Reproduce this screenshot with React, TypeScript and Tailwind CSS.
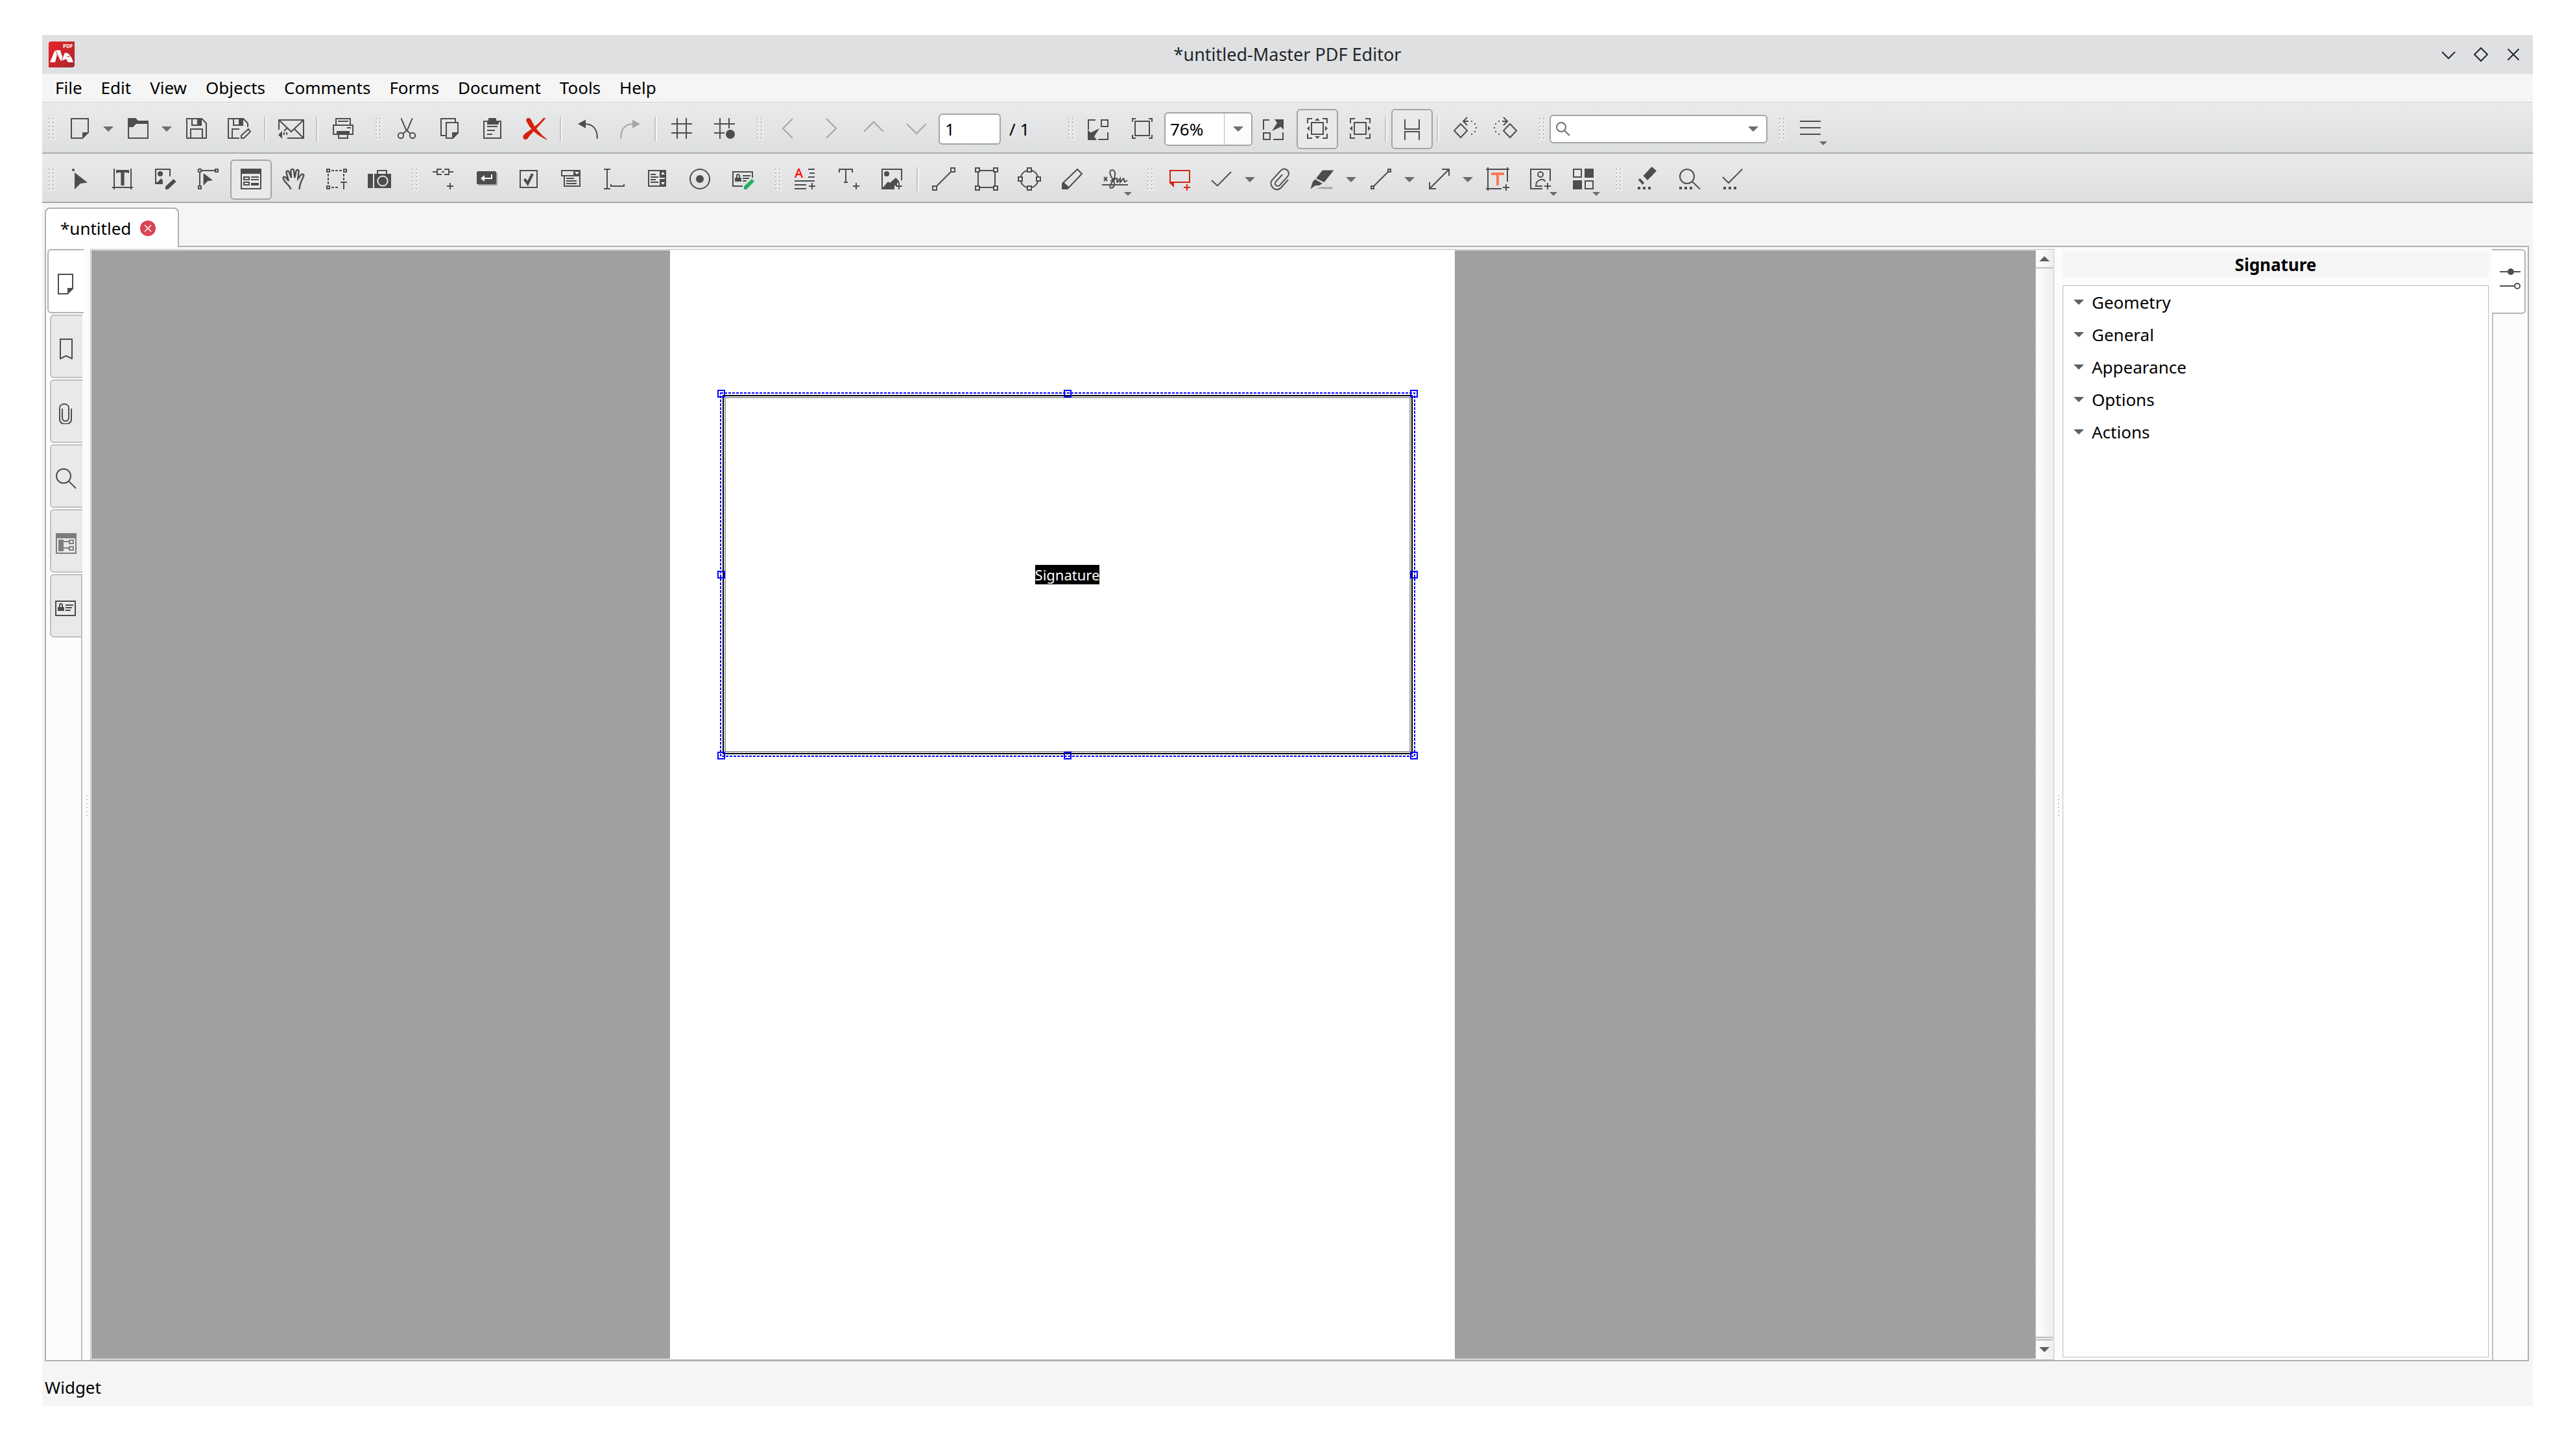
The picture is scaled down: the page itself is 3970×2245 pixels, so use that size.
import { useState } from "react"
import type { ReactNode } from "react"

type ToolProps = {
    label: string
    children: ReactNode
    on?: boolean
    corner?: boolean
    drop?: boolean
    disabled?: boolean
}

function Icon({ children }: { children: ReactNode }){
    return (
        <svg viewBox="0 0 22 22" className="w-11 h-11 shrink-0" fill="none" stroke="currentColor" aria-hidden="true">
            {children}
        </svg>
    )
}

// solid shape, no outline
function Solid({ d, color = "currentColor" }: { d: string, color?: string }){
    return <path d={d} fill={color} stroke="none"/>
}

function Triangle({ className }: { className: string }){
    return (
        <svg viewBox="0 0 16 8" preserveAspectRatio="none" className={className} aria-hidden="true">
            <path d="M0 0H16L8 8Z" fill="currentColor"/>
        </svg>
    )
}

function Tool({ label, children, on, corner, drop, disabled }: ToolProps){
    return (
        <div className="flex items-center">
            <button
                aria-label={label}
                aria-pressed={on}
                disabled={disabled}
                className={`relative flex w-16 h-[62px] items-center justify-center rounded-md border-2 pb-[2px] ${on ? "border-[#a3a4a5] bg-[#e9e9e9]" : "border-transparent"} ${disabled ? "text-[#a5a6a7]" : "text-[#4d4d4d]"}`}
            >
                <Icon>{children}</Icon>
                {corner ? <Triangle className="absolute right-1 bottom-1 w-3 h-[6px] text-[#6c6d6f]"/> : null}
            </button>
            {drop ? <button aria-label={`${label} options`} className="flex w-6 h-[62px] items-center justify-center text-[#6c6d6f]"><Triangle className="w-4 h-2"/></button> : null}
        </div>
    )
}

function Grip(){
    return (
        <svg viewBox="0 0 10 34" className="w-[10px] h-[34px] mr-1 shrink-0" aria-hidden="true">
            {[0, 6, 12, 18, 24, 30].map((y) =>
                <g key={y}>
                    <path d={`M0 ${y}h4v4h-4zM6 ${y}h4v4h-4z`} fill="#f1f2f2"/>
                    <path d={`M0 ${y}h2v2h-2zM6 ${y}h2v2h-2z`} fill="#b4b6b7"/>
                </g>
            )}
        </svg>
    )
}

function Separator(){
    return (
        <div className="flex w-3 justify-center">
            <div className="h-[38px] w-1 border-l-2 border-[#c3c5c6] bg-[#f6f6f7]"/>
        </div>
    )
}

function Group({ children, last }: { children: ReactNode, last?: boolean }){
    return (
        <div className={`flex items-center gap-[2px] pl-[10px] pr-2 h-full ${last ? "flex-1" : "shrink-0"}`}>
            <Grip/>
            {children}
        </div>
    )
}

const plus = "M14 16.5h5M16.5 14v5"
const clip = "M15.5 7v8.5a4.5 4 0 0 1-9 0V5.5a3.5 3.5 0 0 1 7 0v9a2 2 0 0 1-4 0V7"

function MainToolbar(){
    const [page, setPage] = useState("1")
    return (
        <div className="flex items-center h-[77px] pt-2 pb-[5px] border-b-2 border-[#a9abac] bg-linear-to-b from-[#e9eaec] to-[#dddfe0]">
            <Group>
                <Tool label="New" drop>
                    <path d="M4.5 3.5H17.5V14L13 18.5H4.5Z"/>
                    <Solid d="M13 14h5l-5 5z"/>
                </Tool>
                <Tool label="Open" drop>
                    <path d="M3.5 8V18.5H18.5V6"/>
                    <Solid d="M3 3h6l2 2h8v2.5H9.5L7 10H3z"/>
                </Tool>
                <Tool label="Save">
                    <path d="M3.5 3.5H15L18.5 7V18.5H3.5ZM7.5 3.5V8.5H14.5V3.5M6.5 18.5V11.5H15.5V18.5"/>
                    <Solid d="M11.5 3.5h3v5h-3z"/>
                </Tool>
                <Tool label="Save as">
                    <path d="M11 18.5H2.5V3.5H14L17.5 7V10M6.5 3.5V8.5H13.5V3.5M5.5 18.5V11.5H11M12.5 18.5V16.5L18 11.5 19.5 13.5 14.5 18.5Z"/>
                    <Solid d="M10.5 3.5h3v5h-3z"/>
                </Tool>
                <Separator/>
                <Tool label="Send by e-mail">
                    <path d="M1.5 12V4.5H20.5V18.5H8M2 5L11 13.5 20 5M13.5 11.5L20.5 18.5M5.5 13L8 10.5M5.5 14v2M7.5 14v2"/>
                    <Solid d="M4 13v6l-3-3z"/>
                </Tool>
                <Separator/>
                <Tool label="Print">
                    <path d="M5.5 8.5V3.5H16.5V8.5M7 5.5h8M6 15.5H3.5V8.5H18.5V15.5H16M14 10.5h3M7.5 15V18.5H14.5V15"/>
                    <Solid d="M6 13h10v3H6z"/>
                </Tool>
            </Group>
            <Group>
                <Tool label="Cut">
                    <path d="M6.7 3.2L10.5 12 13.8 15M15.4 3.2L11.6 12 8.3 15"/>
                    <circle cx="6.5" cy="16.5" r="2.1"/>
                    <circle cx="15.5" cy="16.5" r="2.1"/>
                </Tool>
                <Tool label="Copy">
                    <path d="M8 16.5H4.5V3.5H15.5V6.5M8.5 6.5H17.5V14.5L13.5 18.5H8.5Z"/>
                    <Solid d="M13 14h5l-5 5z"/>
                </Tool>
                <Tool label="Paste">
                    <path d="M4.5 5.5H17.5V18.5H4.5ZM7 9.5h8M7 12.5h6M7 15.5h4"/>
                    <Solid d="M8 3h6v2h2v3H7V5h1z"/>
                </Tool>
                <Tool label="Delete">
                    <Solid color="#d5220f" d="M4.2 5.3C3.8 2.6 6.8 2 8 4.5C10.5 10 15 15.5 20.3 19.4L19.8 19.8C13.5 16.8 7.5 12.5 4.2 5.3Z"/>
                    <Solid color="#d5220f" d="M17.3 3H19.3C15 8.5 9 13.5 5.3 18.7C3.8 20.6 1 19 1.8 16.6C3.5 14 12.5 9.5 17.3 3Z"/>
                </Tool>
                <Separator/>
                <Tool label="Undo">
                    <path d="M9 7.5C15.5 7.5 19.3 11.5 18.8 19"/>
                    <Solid d="M10 4.3v6.6L4 7.5z"/>
                </Tool>
                <Tool label="Redo" disabled>
                    <path d="M14 7.5C7.5 7.5 3.7 11.5 4.2 19"/>
                    <Solid d="M13 4.3v6.6l6-3.4z"/>
                </Tool>
                <Separator/>
                <Tool label="Show grid">
                    <path d="M7.5 3V19M14.5 3V19M3 7.5H19M3 14.5H19"/>
                </Tool>
                <Tool label="Snap to grid">
                    <path d="M7.5 3V19M14.5 3V11M3 7.5H19M3 14.5H11"/>
                    <circle cx="15.5" cy="15.5" r="3.5" fill="currentColor" stroke="none"/>
                </Tool>
            </Group>
            <Group>
                <Tool label="Previous page" disabled><path d="M14.5 3.5L7 11 14.5 18.5"/></Tool>
                <Tool label="Next page" disabled><path d="M7.5 3.5L15 11 7.5 18.5"/></Tool>
                <Tool label="Page up" disabled><path d="M3.5 13.5L11 6 18.5 13.5"/></Tool>
                <Tool label="Page down" disabled><path d="M3.5 7.5L11 15 18.5 7.5"/></Tool>
                <input
                    aria-label="Page"
                    value={page}
                    onChange={(e) => setPage(e.target.value)}
                    className="w-24 h-12 rounded-md border-2 border-[#a3a4a5] bg-white px-2 text-black"
                />
                <span className="w-[84px] pl-[11px]">/ 1</span>
            </Group>
            <Group>
                <Tool label="Zoom out">
                    <path d="M8 4.5H2.5V12M12.5 4.5h5v5h-5zM17.5 14V19.5H10"/>
                    <Solid d="M2 20V12l2.2 2.2L11 11l-4 6.3 2 2.7z"/>
                </Tool>
                <Tool label="Actual size">
                    <path d="M5.5 5.5h11v11h-11zM3.5 6V3.5H6M16 3.5h2.5V6M18.5 16v2.5H16M6 18.5H3.5V16"/>
                </Tool>
                <div className="relative w-[136px] h-[52px] rounded-md border-2 border-[#a3a4a5] bg-white">
                    <select aria-label="Zoom" className="w-full h-full appearance-none px-[7px] text-black">
                        <option>76%</option>
                        <option>100%</option>
                    </select>
                    <div className="pointer-events-none absolute right-0 top-0 flex h-full w-[42px] items-center justify-center rounded-r border-l border-[#b5b6b7] bg-[#fcfcfc] text-[#6c6d6f]"><Triangle className="w-4 h-2"/></div>
                </div>
                <Tool label="Zoom in">
                    <path d="M7 4.5H2.5V12M2.5 14.5h5v5h-5zM17.5 14V19.5H10"/>
                    <Solid d="M18 4v8l-2.2-2.2L9 13l4-6.3L11 4z"/>
                </Tool>
                <Tool label="Fit page" on>
                    <path d="M6.5 6.5h9v9h-9zM3.5 7V3.5H7M15 3.5h3.5V7M18.5 15v3.5H15M7 18.5H3.5V15"/>
                    <Solid d="M9 5h4l-2-2zM9 17h4l-2 2zM5 9v4l-2-2zM17 9v4l2-2z"/>
                </Tool>
                <Tool label="Fit width">
                    <path d="M6.5 6.5h9v9h-9zM3.5 7V3.5H7M15 3.5h3.5V7M18.5 15v3.5H15M7 18.5H3.5V15"/>
                    <Solid d="M5 9v4l-2-2zM17 9v4l2-2z"/>
                </Tool>
                <Separator/>
                <Tool label="Continuous pages" on><path d="M5.5 4V11.5H16.5V4M5.5 20V13.5H16.5V20"/></Tool>
                <Separator/>
                <Tool label="Rotate left">
                    <path d="M8.5 7.5L13.5 12.7 8.5 18 3.5 12.7ZM14.5 5.5H10.5M13.5 2.5L10.5 5.5 13.5 8.5"/>
                    <Solid d="M16.5 5h1v1h-1zM19 7h1v1h-1zM20 10h1v1h-1zM19 13h1v1h-1zM16.5 15h1v1h-1z"/>
                </Tool>
                <Tool label="Rotate right">
                    <path d="M13.5 7.5L18.5 12.7 13.5 18 8.5 12.7ZM7.5 5.5H11.5M8.5 2.5L11.5 5.5 8.5 8.5"/>
                    <Solid d="M5.5 5h-1v1h1zM3 7h-1v1h1zM2 10h-1v1h1zM3 13h-1v1h1zM5.5 15h-1v1h1z"/>
                </Tool>
            </Group>
            <Group>
                <div className="flex w-[336px] h-11 items-center rounded-md border-2 border-[#a3a4a5] bg-white pl-2 pr-3">
                    <svg viewBox="0 0 22 22" className="w-[22px] h-[22px] shrink-0 text-[#707070]" fill="none" stroke="currentColor" strokeWidth="2" aria-hidden="true">
                        <circle cx="8" cy="8" r="7"/>
                        <path d="M13 13.5L21 21"/>
                    </svg>
                    <input aria-label="Search" className="min-w-0 flex-1 px-2 outline-none"/>
                    <Triangle className="w-4 h-2 shrink-0 text-[#6c6d6f]"/>
                </div>
            </Group>
            <Group last>
                <Tool label="Menu" corner><path d="M3 5.5H19M3 10.5H19M3 15.5H19"/></Tool>
            </Group>
        </div>
    )
}

function EditToolbar(){
    return (
        <div className="flex items-center h-[76px] pt-[9px] pb-[3px] border-b-2 border-[#a9abac] bg-linear-to-b from-[#e9eaec] to-[#dddfe0]">
            <Group>
                <Tool label="Select">
                    <circle cx="6" cy="4" r="1" fill="currentColor" stroke="none"/>
                    <Solid d="M7 6L17 13.7 11.5 14.5 7 19z"/>
                </Tool>
                <Tool label="Edit text">
                    <path d="M4.5 3V19M17.5 3V19M3 17.5H19"/>
                    <Solid d="M6 4h10v2.5h-1V6h-2.7v10H9.7V6H7v.5H6z"/>
                </Tool>
                <Tool label="Edit images">
                    <path d="M3.5 14.5V3.5H14.5V9"/>
                    <circle cx="7" cy="7" r="2" fill="currentColor" stroke="none"/>
                    <Solid d="M3 13l2 .5 2.5-3 1.5 1.5v3H3zM11 19v-2.3L17.3 11l2 2L13 19z"/>
                </Tool>
                <Tool label="Edit vectors">
                    <path d="M6 4.5H16M4.5 6V16M16.5 3.5h2v2h-2zM3.5 16.5h2v2h-2z"/>
                    <circle cx="4.5" cy="4.5" r="1.2"/>
                    <Solid d="M7.3 6.5L14.5 12 10.5 12.6 7.3 16z"/>
                </Tool>
                <Tool label="Edit forms" on>
                    <path d="M3.5 3.5h15v15h-15zM5.5 9.5h4v2h-4zM5.5 13.5h4v2h-4zM11 9.5h6M11 11.5h6"/>
                    <Solid d="M3 3h16v4H3zM11 14h6v2h-6z"/>
                </Tool>
                <Tool label="Hand">
                    <path d="M8.5 19C8.5 16 4 14.5 2.9 10.6C2.6 9.3 4.2 8.8 5 10L7 12.5 5.3 6.2C5 4.7 6.8 4.2 7.3 5.6L9 10 8.7 4.6C8.7 3.1 10.8 3 11 4.5L11.7 10 12.8 4.8C13.2 3.4 15 3.7 14.8 5.2L14.2 10.8 16.6 7.8C17.5 6.7 19 7.5 18.5 8.8C17.5 11.5 15.3 14.5 15.3 19" strokeWidth="1.2"/>
                </Tool>
                <Tool label="Select text">
                    <path d="M3.5 3.5h2v2h-2zM16.5 3.5h2v2h-2zM3.5 16.5h2v2h-2zM14 13.5h5M16.5 13.5V19"/>
                    <path d="M7 4.5H16M4.5 7V16M7 17.5H12M16.5 7V12" strokeDasharray="2 1"/>
                </Tool>
                <Tool label="Snapshot">
                    <path d="M9.5 8V4.5H16.5V8"/>
                    <Solid d="M7 7h13v11H7zM2 7h4v11H2z"/>
                    <circle cx="13.5" cy="12.5" r="3.8" stroke="#e4e5e6"/>
                </Tool>
            </Group>
            <Group>
                <Tool label="Link">
                    <path d="M3 5.5h3M16 5.5h3M10 5.5h2M10 3.5H6.5v4H10M12 3.5h3.5v4H12"/>
                    <path d={plus}/>
                </Tool>
                <Tool label="Button">
                    <rect x="5" y="6" width="15" height="10" rx="1" fill="#a0a1a2" stroke="none"/>
                    <rect x="4" y="5" width="15" height="10" rx="1" fill="currentColor" stroke="none"/>
                    <path d="M15.5 7.5V10.5H9" stroke="#ffffff"/>
                    <Solid d="M10 8v5l-3-2.5z" color="#ffffff"/>
                </Tool>
                <Tool label="Check box">
                    <path d="M4.5 4.5h13v13h-13z"/>
                    <path d="M7.8 11L10.3 14.5 14 7" strokeWidth="2"/>
                </Tool>
                <Tool label="Combo box">
                    <path d="M3.5 4.5H17.5V16.5H5.5V8.5H3.5ZM5.5 8.5H17.5M7 10.5h6M7 12.5h8M7 14.5h8"/>
                    <Solid d="M12.5 4.5h5v4h-5z"/>
                    <Solid d="M13.5 5.5h3.5L15.2 7.5z" color="#ffffff"/>
                </Tool>
                <Tool label="Text field"><path d="M5.5 3.5V18.5M3 3.5H8M3 18.5H8M8.5 15V16.5H18.5V15"/></Tool>
                <Tool label="List box">
                    <path d="M4.5 4.5h13v12h-13zM6 7.5h4M6 9.5h6M6 11.5h4M6 13.5h6M13 9.5h5M13 11.5h5"/>
                    <Solid d="M13 4h5v5h-5zM13 12h5v5h-5z"/>
                    <Solid d="M14 7.5h3L15.5 5.5zM14 13.5h3l-1.5 2z" color="#ffffff"/>
                </Tool>
                <Tool label="Radio button">
                    <circle cx="11" cy="11" r="7.5"/>
                    <circle cx="11" cy="11" r="3" fill="currentColor" stroke="none"/>
                </Tool>
                <Tool label="Signature field">
                    <path d="M11 16.5H3.5V5.5H18.5V10M11 8.5h6M11 10.5h5M11 12.5h3M6.5 10V8.5a1 1 0 0 1 2 0V10"/>
                    <Solid d="M5 10h5v3H5z"/>
                    <Solid d="M12 19v-2.3L18 11l2 1.8L14 19z" color="#27ae60"/>
                </Tool>
            </Group>
            <Group>
                <Tool label="Edit document text">
                    <text x="2" y="10" fontSize="10" fontWeight="500" fill="#ff0000" stroke="none">A</text>
                    <path d="M12.5 3.5h5M13.5 6.5h4M12.5 9.5h5M2 12.5H17.5M2 15.5H11M2 18.5H11M13 16.5h5M15.5 14v5"/>
                </Tool>
                <Tool label="Insert text">
                    <path d="M3.5 6V3.5H13.5V6M8.5 3.5V13.5M7 13.5h3"/>
                    <path d={plus}/>
                </Tool>
                <Tool label="Insert image">
                    <path d="M12 18.5H3.5V3.5H18.5V12"/>
                    <circle cx="7" cy="7" r="2" fill="currentColor" stroke="none"/>
                    <Solid d="M3 19L8 13l1.5 1L14 10l2.5 2.5V14H15v2h-2v3z"/>
                    <path d={plus}/>
                </Tool>
                <Separator/>
                <Tool label="Line"><path d="M2.5 16.5h3v3h-3zM16.5 2.5h3v3h-3zM5.5 16.5L16.5 5.5"/></Tool>
                <Tool label="Rectangle"><path d="M2.5 2.5h3v3h-3zM16.5 2.5h3v3h-3zM2.5 16.5h3v3h-3zM16.5 16.5h3v3h-3zM6 4.5H16M6 17.5H16M4.5 6V16M17.5 6V16"/></Tool>
                <Tool label="Ellipse">
                    <circle cx="11" cy="11" r="6.8"/>
                    <path fill="#e2e4e5" d="M9.5 2.5h3v3h-3zM9.5 16.5h3v3h-3zM2.5 9.5h3v3h-3zM16.5 9.5h3v3h-3z"/>
                </Tool>
                <Tool label="Pencil">
                    <path d="M3.5 18.5V14.5L15 3.5 18.5 7 7.5 18.5Z"/>
                    <Solid d="M3 19V15l1.5-1.5 4.5 4-2 1.5z"/>
                </Tool>
                <Tool label="Signature" corner>
                    <path d="M2.5 9.5l2.5 3M5 9.5l-2.5 3M1 15.5H21M7.5 12.5C12 11.5 12 4 9 4C6 4 7 8 9.5 11.5C12 15.5 9.5 18 8 18C5.5 17.5 9 12 12 10.5C14 10 11.5 13.5 13 13.5L15 10.5V13.5L17.5 10.5C18.5 10.5 17.5 13 18.5 13.2L20.5 12"/>
                </Tool>
            </Group>
            <Group>
                <Tool label="Comment">
                    <path stroke="#d5220f" d="M4.5 4.5h15v9h-15zM15 17.5h5M17.5 15v5"/>
                    <Solid color="#d5220f" d="M4 14h3.5v3.5z"/>
                </Tool>
                <Tool label="Stamp" drop><path d="M3.5 12L8 16.2 18.5 5.5"/></Tool>
                <Tool label="Attach file"><path transform="translate(.5 .5) rotate(42 11 11)" d={clip}/></Tool>
                <Tool label="Highlight" drop>
                    <Solid d="M11 4.3h8.7L12.3 13.5 6 10.5z"/>
                    <Solid d="M5.3 11.3L11 14.5 8.3 16H5.5L1.7 18.7 3.5 13z"/>
                    <Solid d="M6 18.5L10 17.3H19.5L18 18.7z" color="#a3a4a5"/>
                </Tool>
                <Tool label="Draw line" drop><path d="M3.5 16.5h2v2h-2zM16.5 3.5h2v2h-2zM5.5 16.5L16.5 5.5"/></Tool>
                <Tool label="Measure" drop><path d="M3.5 13.5V18.5H8.5M3.5 18.5L18.5 3.5M13 3.5H18.5V8.5"/></Tool>
                <Tool label="Text box">
                    <path d="M3.5 2V20M2 3.5H20M18.5 2V13M2 18.5H14M15 17.5h5M17.5 15v5"/>
                    <Solid d="M6 6h10v2h-4v8h-2V8H6z" color="#fa7850"/>
                </Tool>
                <Tool label="Stamps" corner>
                    <path d="M12.5 18.5H3.5V3.5H18.5V12.5M7.5 16.5C7.5 10.5 14.5 10.5 14.5 13M7 16.5H12.5"/>
                    <circle cx="11" cy="7.5" r="2"/>
                    <path d={plus}/>
                </Tool>
                <Tool label="More shapes" corner>
                    <path d="M3.5 3.5h6v6h-6zM12.5 12.5h6v6h-6z"/>
                    <Solid d="M12 3h7v7h-7zM3 12h7v7H3z"/>
                </Tool>
            </Group>
            <Group last>
                <Tool label="Redact">
                    <Solid d="M14.8 1.5L18.5 4.8 11.5 12 8.2 8.5zM5.8 10.5L9 14 7.8 15.5 4.3 11.5z"/>
                    <Solid d="M4 17h2v2H4zM8 17h2v2H8zM12 17h2v2h-2z"/>
                </Tool>
                <Tool label="Search and redact">
                    <circle cx="9" cy="9" r="5.5"/>
                    <path d="M13 13L19 18.7"/>
                    <Solid d="M3 17h2v2H3zM7 17h2v2H7zM11 17h2v2h-2z"/>
                </Tool>
                <Tool label="Apply redactions">
                    <path d="M3.5 9.5L8 14 18.7 3.3"/>
                    <Solid d="M4 17h2v2H4zM8 17h2v2H8zM12 17h2v2h-2z"/>
                </Tool>
            </Group>
        </div>
    )
}

const sideTabs = [
    { label: "Bookmarks", icon: <path d="M7 1H25V31L16 26.5 7 31Z"/> },
    { label: "Attachments", icon: <path d="M24 8V25C24 34 6 34 6 25V7C6 -1 20 -1 20 7V22C20 29 10 29 10 22V8"/> },
    { label: "Search", icon: <><circle cx="12" cy="12" r="11"/><path d="M19.5 19.5L31 31"/></> },
    { label: "Form fields", icon: <g className="text-[#7d7d7d]" stroke="currentColor"><path d="M1 1H31V31H1ZM12 13H21M12 23H21M21 11h6v5h-6zM21 21h6v5h-6z"/><path d="M0 0H32V8H0zM4 10h8v18H4z" fill="currentColor" stroke="none"/></g> },
    { label: "Signatures", icon: <><path d="M1 5H31V27H1ZM16 11h12M16 15h10M16 19h8"/><path d="M7 14v-3a2 2 0 0 1 4 0v3"/><path d="M4 14h10v6H4z" fill="currentColor" stroke="none"/></> },
]

function SideTabs(){
    return (
        <div className="flex w-[58px] shrink-0 flex-col pl-[2px] pt-[3px] text-[#4d4d4d]">
            <button aria-label="Pages" className="flex h-[99px] shrink-0 items-center justify-center rounded-l-md border-2 border-r-0 border-[#b3b3b3] bg-white pr-[2px] pt-2">
                <svg viewBox="0 0 32 32" className="w-8 h-8" fill="none" stroke="currentColor" strokeWidth="2" aria-hidden="true">
                    <path d="M5 1H27V23L19 31H5Z"/>
                    <path d="M19 22H28L19 32Z" fill="currentColor" stroke="none"/>
                </svg>
            </button>
            <div className="ml-1 mr-[2px] mt-[2px] flex flex-col gap-[2px]">
                {sideTabs.map((tab) =>
                    <button key={tab.label} aria-label={tab.label} className="flex h-[98px] items-center justify-center rounded-l-md border-2 border-r-0 border-[#c0c0c0] bg-[#e9e9e9] pr-[2px] pt-2 last:border-r-2">
                        <svg viewBox="0 0 32 32" className="w-8 h-8" fill="none" stroke="currentColor" strokeWidth="2" aria-hidden="true">{tab.icon}</svg>
                    </button>
                )}
            </div>
            <div className="mr-[2px] flex-1 border-r-2 border-[#c0c0c0]"/>
        </div>
    )
}

function SplitHandle(){
    return (
        <svg viewBox="0 0 4 34" className="w-1 h-[34px]" aria-hidden="true">
            <path d="M2 0V34" stroke="#c8c8c8" strokeWidth="2" strokeDasharray="2 4"/>
        </svg>
    )
}

const handles = [
    "-left-1 -top-1",
    "left-1/2 -ml-[6px] -top-1",
    "-right-1 -top-1",
    "-left-1 top-1/2 -mt-[6px]",
    "-right-1 top-1/2 -mt-[6px]",
    "-left-1 -bottom-1",
    "left-1/2 -ml-[6px] -bottom-1",
    "-right-1 -bottom-1",
]

function Canvas(){
    return (
        <div className="mt-[3px] flex min-w-0 flex-1 border border-[#b8b8b8] bg-white p-px">
            <div className="min-w-0 flex-1 overflow-hidden bg-[#a0a0a0] pr-1">
                <div className="relative mx-auto h-full w-[1210px] bg-white">
                    <div className="absolute left-[77px] top-[219px] h-[562px] w-[1072px]">
                        <svg className="absolute inset-0 h-full w-full" aria-hidden="true">
                            <rect x="1" y="1" width="1070" height="560" fill="none" stroke="#0000ff" strokeWidth="2" strokeDasharray="4 2"/>
                        </svg>
                        <div className="absolute inset-1 border-2 border-black p-px">
                            <div className="flex h-full w-full items-center justify-center border-2 border-[#a4a4a8]">
                                <span className="bg-black text-[22px] leading-[30px] text-white">Signature</span>
                            </div>
                        </div>
                        {handles.map((place) => <span key={place} className={`absolute h-3 w-3 border-2 border-[#0000ff] ${place}`}/>)}
                    </div>
                </div>
            </div>
            <div className="flex w-[27px] shrink-0 flex-col border-l border-[#c4c4c4] bg-linear-to-r from-white to-[#eeeeee] text-[#606060]">
                <button aria-label="Scroll up" className="flex h-7 items-center justify-center border-b-2 border-[#c0c0c0]">
                    <Triangle className="w-4 h-2 rotate-180"/>
                </button>
                <div className="flex-1"/>
                <div className="h-[6px] border-y-2 border-[#c0c0c0] bg-[#e9e9e9]"/>
                <button aria-label="Scroll down" className="flex h-7 items-center justify-center">
                    <Triangle className="w-4 h-2"/>
                </button>
            </div>
        </div>
    )
}

const sections = ["Geometry", "General", "Appearance", "Options", "Actions"]

function Inspector(){
    return (
        <aside className="flex w-[657px] shrink-0 flex-col pt-[7px] pb-1">
            <h2 className="h-10 bg-[#f5f5f5] text-center font-bold leading-10">Signature</h2>
            <ul className="mt-3 flex-1 border border-[#bcbcbc] bg-white">
                {sections.map((name) =>
                    <li key={name}>
                        <button className="flex h-[50px] items-center gap-3 pl-4">
                            <Triangle className="w-4 h-2 text-[#606060]"/>
                            {name}
                        </button>
                    </li>
                )}
            </ul>
        </aside>
    )
}

const menus = ["File", "Edit", "View", "Objects", "Comments", "Forms", "Document", "Tools", "Help"]

export default function App(){
    return (
        <div className="h-screen bg-white px-[65px] pt-[54px] pb-[77px] font-['Noto_Sans',sans-serif] text-[26px] leading-9 text-black">
            <div className="flex h-full flex-col bg-[#f5f5f5]">
                <header className="grid h-[60px] shrink-0 grid-cols-[1fr_auto_1fr] items-center bg-[#dee0e2] text-[#232629]">
                    <svg viewBox="0 0 40 40" className="ml-[10px] w-10 h-10" aria-hidden="true">
                        <defs>
                            <linearGradient id="logo" x1="0" y1="0" x2="1" y2="1">
                                <stop offset="0" stopColor="#ec2227"/>
                                <stop offset="1" stopColor="#a52a30"/>
                            </linearGradient>
                        </defs>
                        <path d="M4 0H40V36Q40 40 36 40H0V4Q0 0 4 0Z" fill="url(#logo)"/>
                        <path d="M2 32L9 15Q10 13.5 12 13.5H18L21 24 24 18.5Q25 17 28 17.5Q34 19 38 32H30L27 27 20 29.5Q18 30 17 28L13 20 10 32Z" fill="#fff"/>
                        <path d="M11 15L18 30M28 24L34 22M20 28L24 19" stroke="#b8292e" strokeWidth="1" fill="none"/>
                        <text x="22" y="10" fontSize="8" fontWeight="700" fill="#fff">PDF</text>
                    </svg>
                    <h1 className="pb-px text-[27px]">*untitled-Master PDF Editor</h1>
                    <div className="flex justify-end gap-[2px] pr-[6px]">
                        <button aria-label="Minimize" className="flex w-12 justify-center"><svg viewBox="0 0 24 24" className="w-6 h-6" fill="none" stroke="currentColor" strokeWidth="2"><path d="M2 8L12 18 22 8"/></svg></button>
                        <button aria-label="Maximize" className="flex w-12 justify-center"><svg viewBox="0 0 24 24" className="w-6 h-6" fill="none" stroke="currentColor" strokeWidth="2"><path d="M12 2L22 12 12 22 2 12Z"/></svg></button>
                        <button aria-label="Close" className="flex w-12 justify-center"><svg viewBox="0 0 24 24" className="w-6 h-6" fill="none" stroke="currentColor" strokeWidth="2"><path d="M3.5 3.5L20.5 20.5M20.5 3.5L3.5 20.5"/></svg></button>
                    </div>
                </header>

                <nav className="flex h-[46px] shrink-0 gap-px pb-px">
                    {menus.map((name) => <button key={name} className="border-b-2 border-[#dcdcdc] pl-5 pr-2 pb-px">{name}</button>)}
                    <div className="flex-1 border-b-2 border-[#dcdcdc]"/>
                </nav>

                <MainToolbar/>
                <EditToolbar/>

                <div className="flex h-[68px] shrink-0 items-end pl-1">
                    <div className="flex h-[61px] items-center rounded-t-lg border-2 border-b-0 border-[#b0b0b0] bg-white pl-[22px] pr-[34px]">
                        *untitled
                        <button aria-label="Close tab" className="ml-[14px] mt-px">
                            <svg viewBox="0 0 24 24" className="w-6 h-6" aria-hidden="true">
                                <circle cx="12" cy="12" r="12" fill="#da4453"/>
                                <path d="M7 7L17 17M17 7L7 17" stroke="#fff" strokeWidth="1.5"/>
                            </svg>
                        </button>
                    </div>
                    <div className="mr-[6px] h-[2px] flex-1 bg-[#b0b0b0]"/>
                </div>

                <main className="ml-1 mr-[6px] flex min-h-0 flex-1 border-x-2 border-b-2 border-[#b0b0b0] bg-[#fcfcfc]">
                    <SideTabs/>
                    <div className="flex w-[10px] shrink-0 items-center justify-center pt-2"><SplitHandle/></div>
                    <Canvas/>
                    <div className="flex w-[13px] shrink-0 items-center justify-center pt-2"><SplitHandle/></div>
                    <Inspector/>
                    <div className="ml-[5px] flex w-[55px] shrink-0 flex-col pt-[3px]">
                        <button aria-label="Properties" className="mr-[3px] flex h-[100px] items-center justify-end rounded-r-md border-2 border-l-0 border-[#b3b3b3] bg-white pr-[6px] pb-2 text-[#4d4d4d]">
                            <svg viewBox="0 0 32 34" className="w-8 h-[34px]" fill="none" stroke="currentColor" strokeWidth="2" aria-hidden="true">
                                <path d="M0 6H32M0 28H23"/>
                                <circle cx="17" cy="6" r="5" fill="currentColor" stroke="none"/>
                                <circle cx="27" cy="28" r="4"/>
                            </svg>
                        </button>
                        <div className="flex-1 border-l-2 border-[#c0c0c0]"/>
                    </div>
                </main>

                <footer className="flex h-[69px] shrink-0 items-center pl-1 pt-[10px]">Widget</footer>
            </div>
        </div>
    )
}
